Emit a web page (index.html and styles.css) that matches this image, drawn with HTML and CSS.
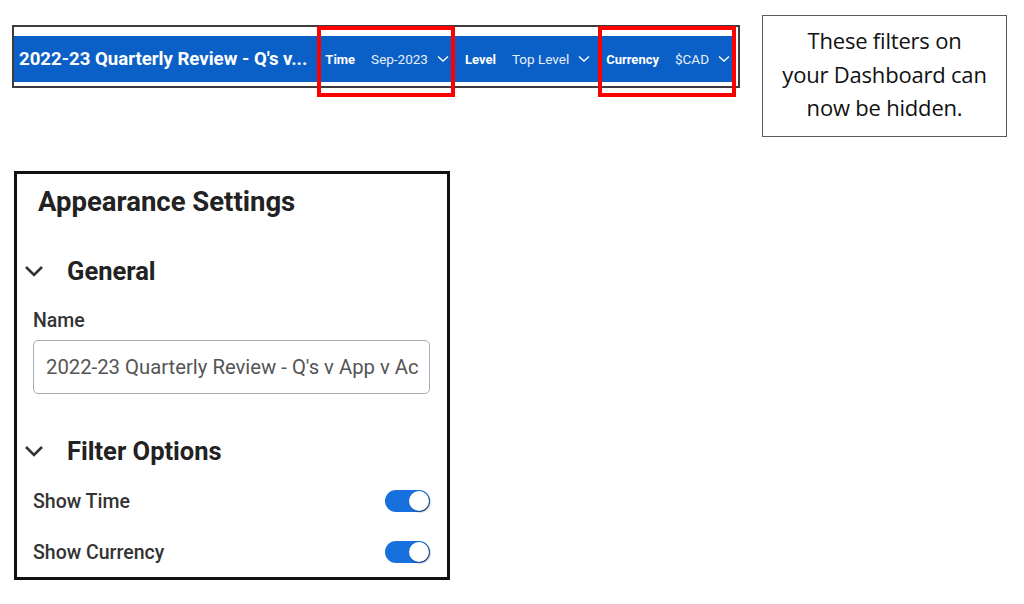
FILE: index.html
```html
<!DOCTYPE html>
<html>
<head>
<meta charset="utf-8">
<link rel="stylesheet" href="styles.css">
</head>
<body>
<div class="top">
  <div class="bar-frame">
    <div class="bar">
      <div class="bar-title">2022-23 Quarterly Review - Q's v...</div>
      <div class="filter">
        <span class="f-label">Time</span>
        <span class="f-value">Sep-2023</span>
        <svg class="f-chev" viewBox="0 0 12 8"><path d="M1 1.5 L6 6 L11 1.5" /></svg>
      </div>
      <div class="filter">
        <span class="f-label">Level</span>
        <span class="f-value">Top Level</span>
        <svg class="f-chev" viewBox="0 0 12 8"><path d="M1 1.5 L6 6 L11 1.5" /></svg>
      </div>
      <div class="filter">
        <span class="f-label">Currency</span>
        <span class="f-value">$CAD</span>
        <svg class="f-chev" viewBox="0 0 12 8"><path d="M1 1.5 L6 6 L11 1.5" /></svg>
      </div>
    </div>
    <div class="mark mark-time"></div>
    <div class="mark mark-currency"></div>
  </div>
  <div class="note">These filters on<br>your Dashboard can<br>now be hidden.</div>
</div>

<div class="panel">
  <div class="panel-title">Appearance Settings</div>

  <div class="section-head first">
    <svg class="chev" viewBox="0 0 20 12"><path d="M2 2 L10 10 L18 2" /></svg>
    <span>General</span>
  </div>
  <div class="field-label">Name</div>
  <div class="input">2022-23 Quarterly Review - Q's v App v Ac</div>

  <div class="section-head second">
    <svg class="chev" viewBox="0 0 20 12"><path d="M2 2 L10 10 L18 2" /></svg>
    <span>Filter Options</span>
  </div>
  <div class="toggle-row row1">
    <span>Show Time</span>
    <span class="toggle"><span class="knob"></span></span>
  </div>
  <div class="toggle-row row2">
    <span>Show Currency</span>
    <span class="toggle"><span class="knob"></span></span>
  </div>
</div>
</body>
</html>
```

FILE: styles.css
```css
html, body {
  margin: 0;
  padding: 0;
  background: #ffffff;
}

body {
  font-family: Roboto, "Liberation Sans", sans-serif;
  color: #222;
  width: 1024px;
  height: 604px;
  overflow: hidden;
}

.top {
  display: flex;
  align-items: flex-start;
  height: 137px;
}

.bar-frame {
  position: relative;
  margin-left: 12px;
  margin-top: 25px;
  border: 2px solid #3c3c3c;
  padding: 9px 5px 4px 0;
  box-sizing: border-box;
  width: 728px;
  background: #fff;
}

.bar {
  height: 46px;
  background: #0a60c6;
  display: flex;
  align-items: center;
  padding-left: 5px;
  color: #fff;
  overflow: hidden;
}

.bar-title {
  font-size: 18.6px;
  font-weight: 700;
  white-space: nowrap;
  margin-right: 18px;
}

.filter {
  display: flex;
  align-items: center;
  margin-right: 16px;
  font-size: 13px;
  white-space: nowrap;
}

.f-label {
  font-weight: 700;
  margin-right: 16px;
}

.f-value {
  font-weight: 400;
  font-size: 13.5px;
  margin-right: 9px;
  color: #e8f0fb;
}

.f-chev {
  width: 12px;
  height: 8px;
  fill: none;
  stroke: #ffffff;
  stroke-width: 1.4;
}

.mark {
  position: absolute;
  border: 4px solid #ff0000;
  box-sizing: border-box;
  top: -1px;
  height: 71px;
}

.mark-time {
  left: 303px;
  width: 138px;
}

.mark-currency {
  left: 584px;
  width: 138px;
}

.note {
  margin-left: 22px;
  margin-top: 15px;
  width: 245px;
  height: 122px;
  box-sizing: border-box;
  border: 1px solid #5a5a5a;
  padding-top: 8px;
  text-align: center;
  font-family: "Open Sans", "Noto Sans", sans-serif;
  font-size: 22px;
  line-height: 33.5px;
  color: #111;
  letter-spacing: -0.2px;
}

.panel {
  margin-top: 34px;
  margin-left: 14px;
  width: 436px;
  height: 409px;
  box-sizing: border-box;
  border: 3px solid #111;
  padding: 12px 17px 0 16px;
}

.panel-title {
  font-size: 27.5px;
  line-height: 32px;
  font-weight: 700;
  color: #222;
  padding-left: 5px;
}

.section-head {
  display: flex;
  align-items: center;
  margin-left: -9px;
  font-size: 25.5px;
  line-height: 30px;
  font-weight: 700;
  color: #222;
}

.section-head.first {
  margin-top: 38px;
}

.section-head.second {
  margin-top: 42px;
}

.chev {
  width: 20px;
  height: 12px;
  fill: none;
  stroke: #333;
  stroke-width: 2.6;
  margin-right: 23px;
}

.field-label {
  margin-top: 24px;
  font-size: 19.5px;
  line-height: 22px;
  font-weight: 500;
  color: #333;
}

.input {
  margin-top: 8px;
  height: 54px;
  box-sizing: border-box;
  border: 1px solid #a9adb3;
  border-radius: 5px;
  display: flex;
  align-items: center;
  padding-left: 12px;
  font-size: 20.3px;
  color: #555;
  white-space: nowrap;
  overflow: hidden;
}

.toggle-row {
  display: flex;
  align-items: center;
  justify-content: space-between;
  height: 22px;
  font-size: 19.5px;
  font-weight: 500;
  color: #333;
}

.toggle-row.row1 {
  margin-top: 24px;
}

.toggle-row.row2 {
  margin-top: 29px;
}

.toggle {
  position: relative;
  width: 45px;
  height: 22px;
  border-radius: 11px;
  background: #1670de;
  display: flex;
  align-items: center;
  justify-content: flex-end;
  padding-right: 1px;
  box-sizing: border-box;
}

.knob {
  width: 20px;
  height: 20px;
  border-radius: 50%;
  background: #fff;
  box-shadow: 1px 1px 2px rgba(0, 0, 0, 0.5);
}
```
